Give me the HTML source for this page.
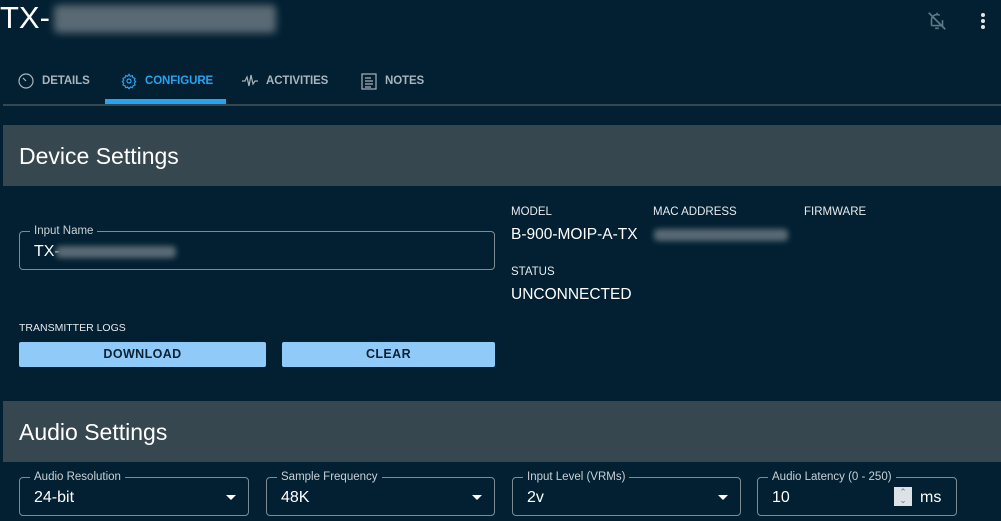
<!DOCTYPE html>
<html><head><style>
*{margin:0;padding:0;box-sizing:border-box}
body{width:1001px;height:521px;background:#022032;font-family:"Liberation Sans",sans-serif;color:#fff;position:relative;overflow:hidden}
.a{position:absolute}
.blur{position:absolute;background:#5a6a75;filter:blur(4px);border-radius:4px}
.tab{position:absolute;top:75px;font-size:11.5px;font-weight:bold;color:#a9b4bc;letter-spacing:-.1px}
.hdr{position:absolute;left:3px;right:0;height:61px;background:#37474f}
.hdr span{position:absolute;left:16px;top:18px;font-size:23px;color:#fff}
.fld{position:absolute;border:1px solid #7d8b94;border-radius:4px;height:39px}
.fld label{position:absolute;top:-7px;left:10px;background:#022032;padding:0 4px;font-size:11.5px;color:#c9d0d5}
.fld .v{position:absolute;left:14px;top:11px;font-size:16px}
.caret{position:absolute;right:12px;top:17px;width:0;height:0;border-left:5px solid transparent;border-right:5px solid transparent;border-top:5px solid #fff}
.lbl{position:absolute;font-size:11.5px;color:#e6eaed}
.val{position:absolute;font-size:15.5px;color:#fff}
.btn{position:absolute;top:342px;height:25px;background:#90caf9;border-radius:2px;color:#0b2233;font-size:12.5px;font-weight:bold;text-align:center;line-height:25px;letter-spacing:.4px}
</style></head><body>
<div class="a" style="left:0;top:0;font-size:31px;line-height:36px">TX-</div>
<div class="blur" style="left:54px;top:5px;width:222px;height:28px"></div>
<svg class="a" style="left:926px;top:10px" width="22" height="22" viewBox="0 0 24 24" fill="none" stroke="#5f7885" stroke-width="1.8"><path d="M6 17V11a6 6 0 0 1 9-5.2M18 11v6H6M10 20h4M12 3v2M3 3l18 18"/></svg>
<div class="a" style="left:981px;top:13px;width:4px;height:4px;border-radius:2px;background:#dfe6ea"></div>
<div class="a" style="left:981px;top:19px;width:4px;height:4px;border-radius:2px;background:#dfe6ea"></div>
<div class="a" style="left:981px;top:25px;width:4px;height:4px;border-radius:2px;background:#dfe6ea"></div>

<svg class="a" style="left:18px;top:73px" width="16" height="16" viewBox="0 0 16 16" fill="none" stroke="#a9b4bc" stroke-width="1.2"><circle cx="8" cy="8" r="7"/><path d="M8 8L5 5"/></svg>
<div class="tab" style="left:42px">DETAILS</div>
<svg class="a" style="left:121px;top:73px" width="16" height="16" viewBox="0 0 24 24" fill="none" stroke="#29a3f0" stroke-width="1.8"><circle cx="12" cy="12" r="3"/><path d="M12 2l2 3 3-1 1 3 3 1-1 3 2 2-2 2 1 3-3 1-1 3-3-1-2 3-2-3-3 1-1-3-3-1 1-3-2-2 2-2-1-3 3-1 1-3 3 1z"/></svg>
<div class="tab" style="left:145px;color:#29a3f0">CONFIGURE</div>
<svg class="a" style="left:242px;top:74px" width="17" height="14" viewBox="0 0 17 14" fill="none" stroke="#a9b4bc" stroke-width="1.2"><path d="M0 7h3l2-4 2 9 2-11 2 9 2-3h3"/></svg>
<div class="tab" style="left:266px">ACTIVITIES</div>
<svg class="a" style="left:361px;top:73px" width="16" height="17" viewBox="0 0 16 17" fill="none" stroke="#a9b4bc" stroke-width="1.2"><rect x="1" y="1" width="14" height="15"/><path d="M4 5h6M4 8h8M4 11h8M4 14h6"/></svg>
<div class="tab" style="left:385px">NOTES</div>
<div class="a" style="left:105px;top:99px;width:121px;height:5px;background:#29a3f0"></div>
<div class="a" style="left:3px;top:104px;right:0;height:2px;background:#37474f"></div>

<div class="hdr" style="top:125px"><span>Device Settings</span></div>
<div class="fld" style="left:19px;top:231px;width:476px"><label>Input Name</label><div class="v">TX-</div></div>
<div class="blur" style="left:56px;top:246px;width:120px;height:12px;filter:blur(3px)"></div>
<div class="lbl" style="left:511px;top:206px">MODEL</div>
<div class="val" style="left:511px;top:226px">B-900-MOIP-A-TX</div>
<div class="lbl" style="left:653px;top:206px">MAC ADDRESS</div>
<div class="blur" style="left:654px;top:229px;width:134px;height:12px;filter:blur(3px)"></div>
<div class="lbl" style="left:804px;top:206px">FIRMWARE</div>
<div class="lbl" style="left:511px;top:266px">STATUS</div>
<div class="val" style="left:511px;top:286px">UNCONNECTED</div>
<div class="lbl" style="left:19px;top:322px;font-size:10.5px">TRANSMITTER LOGS</div>
<div class="btn" style="left:19px;width:247px">DOWNLOAD</div>
<div class="btn" style="left:282px;width:213px">CLEAR</div>

<div class="hdr" style="top:401px"><span>Audio Settings</span></div>
<div class="fld" style="left:19px;top:477px;width:230px"><label>Audio Resolution</label><div class="v">24-bit</div><div class="caret"></div></div>
<div class="fld" style="left:266px;top:477px;width:229px"><label>Sample Frequency</label><div class="v">48K</div><div class="caret"></div></div>
<div class="fld" style="left:512px;top:477px;width:229px"><label>Input Level (VRMs)</label><div class="v">2v</div><div class="caret"></div></div>
<div class="fld" style="left:757px;top:477px;width:200px"><label>Audio Latency (0 - 250)</label><div class="v">10</div>
<div class="a" style="left:136px;top:9px;width:18px;height:19px;background:#dde2e6;color:#777;font-size:9px;line-height:8px;text-align:center;padding-top:1px">&#8963;<br>&#8964;</div>
<div class="a" style="left:162px;top:11px;font-size:16px">ms</div></div>
</body></html>
